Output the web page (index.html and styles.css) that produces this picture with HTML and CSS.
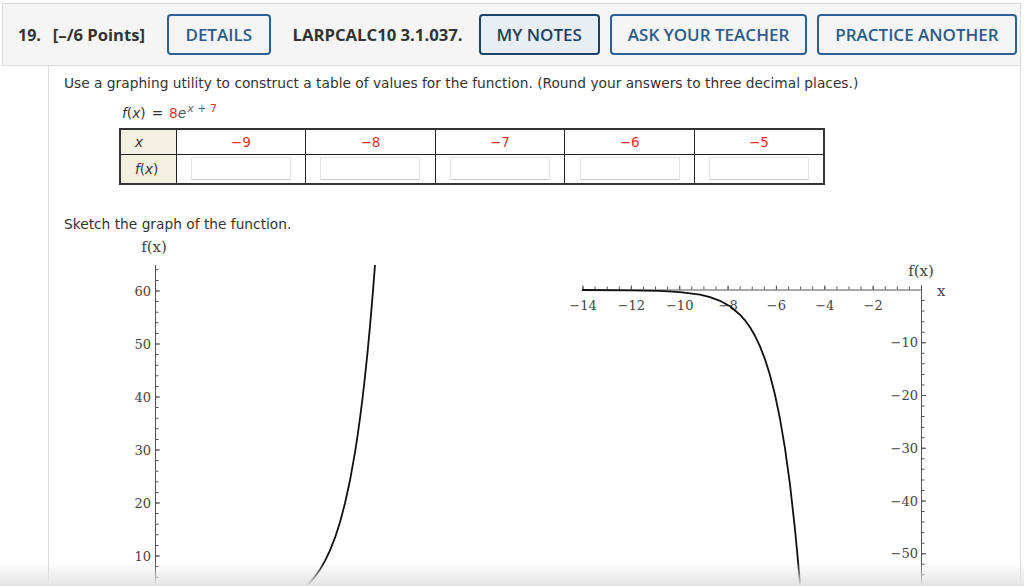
FILE: index.html
```html
<!DOCTYPE html>
<html lang="en">
<head>
<meta charset="utf-8">
<title>Question 19</title>
<link rel="stylesheet" href="styles.css">
</head>
<body>
<div class="question">
  <div class="header">
    <span class="qnum">19.</span>
    <span class="points">[–/6 Points]</span>
    <button class="btn btn-first">DETAILS</button>
    <span class="code">LARPCALC10 3.1.037.</span>
    <button class="btn btn-active">MY NOTES</button>
    <button class="btn">ASK YOUR TEACHER</button>
    <button class="btn">PRACTICE ANOTHER</button>
  </div>
  <div class="content">
    <p class="prompt">Use a graphing utility to construct a table of values for the function. (Round your answers to three decimal places.)</p>
    <div class="formula"><i>f</i>(<i>x</i>)<span class="eq">=</span><span class="red">8</span><i class="e">e</i><span class="sup"><i>x</i> + <span class="red">7</span></span></div>
    <table class="values">
      <tr>
        <th class="label"><i>x</i></th>
        <td class="red">−9</td>
        <td class="red">−8</td>
        <td class="red">−7</td>
        <td class="red">−6</td>
        <td class="red">−5</td>
      </tr>
      <tr class="inputs">
        <th class="label"><i>f</i>(<i>x</i>)</th>
        <td><span class="field"></span></td>
        <td><span class="field"></span></td>
        <td><span class="field"></span></td>
        <td><span class="field"></span></td>
        <td><span class="field"></span></td>
      </tr>
    </table>
    <p class="prompt sketch">Sketch the graph of the function.</p>
    <div class="graphs">
      <svg class="graph graph-left" width="300" height="348" viewBox="110 238 300 348">
        <text class="axis-title" x="154" y="252" text-anchor="middle">f(x)</text>
        <line class="axis" x1="155.5" y1="265" x2="155.5" y2="600"/>
        <line class="tick tick-minor-v" x1="157" y1="269.3" x2="157" y2="600"/>
        <line class="tick tick-major-v" x1="157.75" y1="290.5" x2="157.75" y2="600"/>
        <g class="tick-label" text-anchor="end">
          <text x="151" y="295.5">60</text>
          <text x="151" y="348.5">50</text>
          <text x="151" y="401.5">40</text>
          <text x="151" y="454.5">30</text>
          <text x="151" y="507.5">20</text>
          <text x="151" y="560.5">10</text>
        </g>
        <path class="curve" d="M300 591 L305 587.1 L310 582.3 L315 576.6 L320 569.5 L325 560.9 L330 550.4 L335 537.7 L340 522.2 L345 503.3 L350 480.3 L355 452.3 L357.5 436.1 L360 418.2 L362.5 398.5 L365 376.7 L367.5 352.7 L370 326.1 L372.5 296.9 L375 265"/>
      </svg>
      <svg class="graph graph-right" width="400" height="348" viewBox="560 238 400 348">
        <text class="axis-title" x="921" y="275.5" text-anchor="middle">f(x)</text>
        <text class="axis-title" x="937" y="295.5">x</text>
        <line class="axis" x1="582" y1="290" x2="922" y2="290"/>
        <line class="axis" x1="921.5" y1="285" x2="921.5" y2="600"/>
        <line class="tick tick-minor-h" x1="582.5" y1="288" x2="922" y2="288"/>
        <line class="tick tick-major-h" x1="582.5" y1="287.5" x2="922" y2="287.5"/>
        <line class="tick tick-minor-v2" x1="923" y1="300.05" x2="923" y2="600"/>
        <line class="tick tick-major-v2" x1="923.75" y1="342.25" x2="923.75" y2="600"/>
        <g class="tick-label" text-anchor="middle">
          <text x="583" y="310">−14</text>
          <text x="631.4" y="310">−12</text>
          <text x="679.7" y="310">−10</text>
          <text x="728.1" y="310">−8</text>
          <text x="776.4" y="310">−6</text>
          <text x="824.8" y="310">−4</text>
          <text x="873.1" y="310">−2</text>
        </g>
        <g class="tick-label" text-anchor="end">
          <text x="918" y="347.25">−10</text>
          <text x="918" y="400">−20</text>
          <text x="918" y="452.75">−30</text>
          <text x="918" y="505.5">−40</text>
          <text x="918" y="558.25">−50</text>
        </g>
        <path class="curve" d="M582 290 L630 290.3 L660 290.9 L680 292.1 L700 294.7 L710 297.1 L720 300.8 L730 306.3 L740 314.7 L745 320.3 L750 327.3 L755 335.8 L760 346.4 L765 359.3 L770 375.2 L775 394.7 L780 418.8 L785 448.3 L790 484.7 L795 529.4 L798 561.1 L800 584.3 L802 609.6"/>
      </svg>
    </div>
  </div>
</div>
<div class="fade"></div>
</body>
</html>
```
FILE: styles.css
```css
* { box-sizing: border-box; }
html, body {
  margin: 0;
  padding: 0;
  height: 586px;
  overflow: hidden;
  background: #fff;
}
body {
  font-family: "DejaVu Sans", Verdana, sans-serif;
  color: #333;
}
.question {
  margin: 3px 3px 0 2px;
}
.header {
  display: flex;
  align-items: center;
  height: 63px;
  border: 1px solid #dcdcdc;
  background: #f5f5f5;
  padding-left: 15px;
  font-family: "Open Sans", "Liberation Sans", sans-serif;
  color: #333;
}
.qnum, .points, .code {
  font-weight: 700;
  white-space: nowrap;
}
.qnum { font-size: 16px; }
.points { margin-left: 12px; font-size: 16.6px; }
.code { margin: 0 6px 0 22px; font-size: 16.7px; }
.btn {
  height: 41px;
  padding: 0 16px;
  margin-left: 10px;
  border: 2px solid #2e6193;
  border-radius: 4px;
  background: transparent;
  font-family: "Open Sans", "Liberation Sans", sans-serif;
  font-weight: 600;
  font-size: 17px;
  color: #2b5c8b;
  white-space: nowrap;
}
.btn-first { margin-left: 22px; padding: 0 16.5px; }
.btn-active {
  background: #e8eff4;
  border-color: #1d4268;
  color: #1f3f5f;
}
.content {
  margin-left: 46px;
  border-left: 1px solid #dedede;
  border-right: 1px solid #dedede;
  padding: 8px 0 0 15px;
  height: 520px;
}
.prompt {
  margin: 0;
  font-size: 13.75px;
  line-height: 18px;
}
.red { color: #e4322b; }
.formula {
  margin: 12px 0 0 58px;
  font-size: 13.7px;
  line-height: 18px;
}
.formula .eq { margin: 0 6px 0 6px; }
.formula .e { color: #555; }
.formula .sup {
  font-size: 11px;
  line-height: 0;
  position: relative;
  top: -6px;
  color: #666;
  margin-left: 1px;
}
.formula .sup .red { color: #e4322b; }
.values {
  margin: 6px 0 0 55px;
  border-collapse: collapse;
  table-layout: fixed;
  width: 704px;
  border: 2px solid #333;
  font-size: 13.5px;
}
.values th, .values td {
  border: 1px solid #222;
  padding: 0;
  text-align: center;
  font-weight: normal;
}
.values tr { height: 25px; }
.values tr.inputs { height: 29.5px; }
.values .label {
  width: 56px;
  background: #f2f1e1;
  text-align: left;
  padding-left: 14px;
  color: #333;
}
.values td { width: 129.6px; }
.field {
  display: block;
  width: 100px;
  height: 23px;
  margin: 0 auto;
  border: 1px solid #e4e4e4;
  border-bottom-color: #c9c9c9;
  background: #fff;
}
.sketch { margin-top: 30px; }
.graphs {
  display: flex;
  margin: 5px 0 0 46px;
  gap: 150px;
}
.graph { display: block; flex: none; overflow: hidden; }
.axis { stroke: #555; stroke-width: 1; }
.tick { stroke: #555; }
.tick-minor-v { stroke-width: 3; stroke-dasharray: 1 9.6; }
.tick-major-v { stroke-width: 4.5; stroke-dasharray: 1 52; }
.tick-minor-h { stroke-width: 3; stroke-dasharray: 1 11.09; }
.tick-major-h { stroke-width: 4; stroke-dasharray: 1 47.36; }
.tick-minor-v2 { stroke-width: 3; stroke-dasharray: 1 9.55; }
.tick-major-v2 { stroke-width: 4.5; stroke-dasharray: 1 51.75; }
.tick-label {
  font-family: "DejaVu Serif", "Liberation Serif", serif;
  font-size: 13px;
  fill: #444;
}
.axis-title {
  font-family: "DejaVu Serif", "Liberation Serif", serif;
  font-size: 15px;
  fill: #444;
}
.curve {
  fill: none;
  stroke: #111;
  stroke-width: 1.8;
  stroke-linejoin: round;
}
.fade {
  position: fixed;
  left: 0;
  right: 0;
  bottom: 0;
  height: 24px;
  background: linear-gradient(rgba(235, 235, 235, 0), #e4e4e4);
  pointer-events: none;
}
```
